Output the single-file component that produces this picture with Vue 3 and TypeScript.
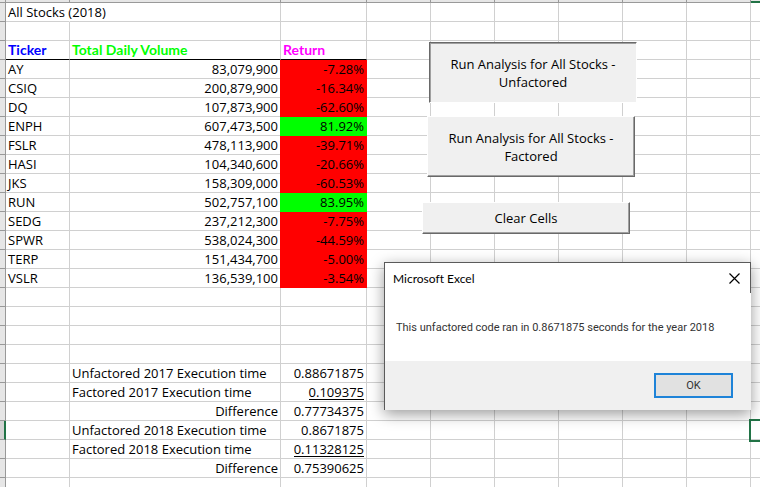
<script setup lang="ts">
import { ref } from 'vue'

type Cell = { text?: string; cls?: string }
type Row = { cells: Cell[]; active?: boolean }

const stocks: [string, string, string][] = [
  ['AY', '83,079,900', '-7.28%'],
  ['CSIQ', '200,879,900', '-16.34%'],
  ['DQ', '107,873,900', '-62.60%'],
  ['ENPH', '607,473,500', '81.92%'],
  ['FSLR', '478,113,900', '-39.71%'],
  ['HASI', '104,340,600', '-20.66%'],
  ['JKS', '158,309,000', '-60.53%'],
  ['RUN', '502,757,100', '83.95%'],
  ['SEDG', '237,212,300', '-7.75%'],
  ['SPWR', '538,024,300', '-44.59%'],
  ['TERP', '151,434,700', '-5.00%'],
  ['VSLR', '136,539,100', '-3.54%'],
]

const timings: [string, string][] = [
  ['Unfactored 2017 Execution time', '0.88671875'],
  ['Factored 2017 Execution time', '0.109375'],
  ['Difference', '0.77734375'],
  ['Unfactored 2018 Execution time', '0.8671875'],
  ['Factored 2018 Execution time', '0.11328125'],
  ['Difference', '0.75390625'],
]

const blank = (): Row => ({ cells: [{}, {}, {}] })

const rows: Row[] = [
  { cells: [{ text: 'All Stocks (2018)', cls: 'spill' }, {}, {}] },
  blank(),
  {
    cells: [
      { text: 'Ticker', cls: 'head ticker' },
      { text: 'Total Daily Volume', cls: 'head volume' },
      { text: 'Return', cls: 'head return' },
    ],
  },
  ...stocks.map(([ticker, volume, change]): Row => {
    const tone = change.startsWith('-') ? 'loss' : 'gain'
    return {
      cells: [{ text: ticker }, { text: volume, cls: 'num' }, { text: change, cls: `num ${tone}` }],
    }
  }),
  blank(),
  blank(),
  blank(),
  blank(),
  ...timings.map(([label, value], i): Row => ({
    active: i === 3,
    cells: [
      {},
      { text: label, cls: label === 'Difference' ? 'num' : '' },
      { text: value, cls: label.startsWith('Factored') ? 'num total' : 'num' },
    ],
  })),
  blank(),
]

const extraColumns = 7
const dialogOpen = ref(true)
</script>

<template>
  <main class="sheet">
    <table class="grid">
      <colgroup>
        <col class="c-gutter" />
        <col class="c-std" />
        <col class="c-wide" />
        <col class="c-return" />
        <col v-for="n in extraColumns - 1" :key="n" class="c-std" />
        <col />
      </colgroup>
      <thead>
        <tr>
          <th v-for="n in 4 + extraColumns" :key="n" :class="{ picked: n === 4 + extraColumns }"></th>
        </tr>
      </thead>
      <tbody>
        <tr v-for="(row, r) in rows" :key="r">
          <th scope="row" :class="{ picked: row.active }"></th>
          <td v-for="(cell, c) in row.cells" :key="c" :class="cell.cls">
            <span v-if="cell.text">{{ cell.text }}</span>
          </td>
          <td v-for="n in extraColumns" :key="'x' + n" :class="{ selected: row.active && n === extraColumns }"></td>
        </tr>
      </tbody>
    </table>

    <button type="button" class="macro pressed unfactored">Run Analysis for All Stocks - Unfactored</button>
    <button type="button" class="macro factored">Run Analysis for All Stocks - Factored</button>
    <button type="button" class="macro clear">Clear Cells</button>

    <section v-if="dialogOpen" class="dialog" role="dialog" aria-labelledby="dlg-title">
      <header class="titlebar">
        <span id="dlg-title">Microsoft Excel</span>
        <button type="button" class="close" aria-label="Close" @click="dialogOpen = false">
          <svg width="11" height="11" viewBox="0 0 11 11">
            <path d="M0.5 0.5 L10.5 10.5 M10.5 0.5 L0.5 10.5" fill="none" stroke="#000" stroke-width="1.2" />
          </svg>
        </button>
      </header>
      <p class="message">This unfactored code ran in 0.8671875 seconds for the year 2018</p>
      <footer class="actions">
        <button type="button" class="ok" @click="dialogOpen = false">OK</button>
      </footer>
    </section>
  </main>
</template>

<style>
body {
  margin: 0;
  background: #fff;
}
</style>

<style scoped>
.sheet {
  position: relative;
  height: 100vh;
  overflow: hidden;
  font-family: 'Open Sans', 'Noto Sans', sans-serif;
  font-size: 13px;
  font-variant-ligatures: none;
  color: #000;
}

.grid {
  width: 100%;
  table-layout: fixed;
  border-collapse: separate;
  border-spacing: 0;
}

.c-gutter {
  width: 6px;
}
.c-std {
  width: 64px;
}
.c-wide {
  width: 211px;
}
.c-return {
  width: 86px;
}

th,
td {
  box-sizing: border-box;
  height: 19px;
  padding: 0 2px;
  border-right: 1px solid #d0d0d0;
  border-bottom: 1px solid #d0d0d0;
  line-height: 18px;
  text-align: left;
  font-weight: 400;
  white-space: nowrap;
}
td:last-child {
  border-right: 0;
}

th {
  padding: 0;
  background: #e6e6e6;
  border-color: #999;
}
thead th {
  height: 3px;
  line-height: 0;
}
thead th.picked {
  border-right: 0;
  border-bottom: 2px solid #217346;
}
tbody th.picked {
  background: #d2d2d2;
  border-right: 2px solid #217346;
}

td.spill {
  border-right-color: transparent;
}
td.head {
  border-bottom-color: #000;
  font-family: Lato, 'Open Sans', sans-serif;
  font-size: 14px;
  font-weight: 700;
}
td.ticker {
  color: #00f;
}
td.volume {
  color: #0f0;
}
td.return {
  color: #f0f;
}

td.num {
  text-align: right;
}
td.loss {
  background: #f00;
  border-color: #f00;
  box-shadow: -1px 0 #f00;
}
td.gain {
  background: #0f0;
  border-color: #0f0;
  box-shadow: -1px 0 #0f0;
}
td.total span {
  display: inline-block;
  box-sizing: border-box;
  height: 17px;
  border-bottom: 1px solid #000;
  vertical-align: top;
}
td.selected {
  position: relative;
  outline: 2px solid #217346;
}

.macro {
  position: absolute;
  box-sizing: border-box;
  width: 208px;
  height: 61px;
  padding: 0 16px;
  border: 1px solid;
  border-color: #fff #696969 #696969 #fff;
  box-shadow: inset -1px -1px #a0a0a0;
  background: #f0f0f0;
  font: inherit;
  font-variant-ligatures: none;
  line-height: 18px;
  color: #000;
}
.macro.pressed {
  border-color: #696969 #fff #fff #696969;
  box-shadow: inset 1px 1px #a0a0a0;
}
.unfactored {
  left: 429px;
  top: 42px;
}
.factored {
  left: 427px;
  top: 116px;
}
.clear {
  left: 422px;
  top: 202px;
  height: 32px;
}

.dialog {
  position: absolute;
  left: 384px;
  top: 262px;
  box-sizing: border-box;
  width: 367px;
  border-top: 1px solid #5a5a5a;
  border-left: 1px solid #5a5a5a;
  background: #fff;
  box-shadow: 0 4px 14px rgba(0, 0, 0, 0.4);
  font-family: Lato, 'Open Sans', sans-serif;
  font-size: 12px;
}
.titlebar {
  display: flex;
  align-items: center;
  justify-content: space-between;
  height: 30px;
  padding: 0 10px 0 8px;
  border-right: 1px solid #5a5a5a;
}
.close {
  display: flex;
  padding: 0;
  border: 0;
  background: none;
}
.message {
  margin: 0;
  padding: 26px 11px 24px;
  font-family: Roboto, 'Open Sans', sans-serif;
  font-size: 11px;
  line-height: 18px;
  color: #333;
  white-space: nowrap;
}
.actions {
  display: flex;
  justify-content: flex-end;
  padding: 12px 18px;
  background: #f0f0f0;
}
.ok {
  box-sizing: border-box;
  width: 79px;
  height: 25px;
  padding: 0;
  border: 2px solid #1e83d8;
  background: #e1e1e1;
  font-family: Roboto, 'Open Sans', sans-serif;
  font-size: 11px;
  color: #333;
}
</style>
